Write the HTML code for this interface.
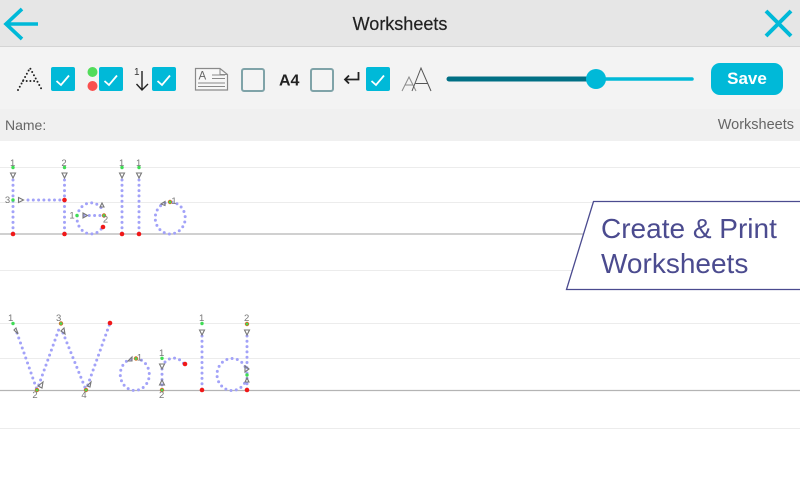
<!DOCTYPE html>
<html>
<head>
<meta charset="utf-8">
<style>
html,body{margin:0;padding:0;background:#fff}
body{width:800px;height:480px;overflow:hidden;position:relative;font-family:"Liberation Sans",sans-serif}
.abs{position:absolute}
.cb{position:absolute;top:67px;width:24px;height:24px;border-radius:2px;background:#00b9d8}
.cb svg{position:absolute;left:0;top:0}
.un{position:absolute;top:68px;width:20px;height:20px;border:2px solid #7fa3a8;border-radius:3px;background:#f4f4f4}
</style>
</head>
<body>
<div class="abs" style="left:0;top:0;width:800px;height:46px;background:#e6e6e6"></div>
<div class="abs" style="left:0;top:46px;width:800px;height:1px;background:#d4d4d4"></div>
<div class="abs" style="left:0;top:47px;width:800px;height:62px;background:#f3f3f3"></div>
<div class="abs" style="left:0;top:109px;width:800px;height:32px;background:#f0f0f0"></div>

<div class="abs" style="left:0;top:13px;width:800px;text-align:center;font-size:18px;line-height:22px;color:#222;-webkit-text-stroke:.2px #222">Worksheets</div>

<svg class="abs" style="left:0;top:0" width="800" height="140">
  <path d="M22 9 L6 24 L22 39 M6 24 H38" fill="none" stroke="#00b9d8" stroke-width="3.6"/>
  <path d="M766 11 L791 36 M791 11 L766 36" fill="none" stroke="#00b9d8" stroke-width="4"/>
  <!-- dotted A -->
  <path d="M18 90 L30 68 L42 90 M23 81 H37" fill="none" stroke="#222" stroke-width="2" stroke-linecap="round" stroke-dasharray="0 3.7"/>
  <!-- dots -->
  <circle cx="92.500" cy="72" r="5" fill="#52dc5a"/>
  <circle cx="92.500" cy="86" r="5" fill="#f9504f"/>
  <!-- order arrow -->
  <text x="134" y="75" font-size="10" fill="#333" font-family="Liberation Sans">1</text>
  <path d="M142 71 V89 M136.500 84 L142 90 L148 84" fill="none" stroke="#222" stroke-width="1.400"/>
  <!-- doc icon -->
  <path d="M195.500 68.500 H220 L227.500 74.500 V90 H195.500 Z" fill="#f7f7f7" stroke="#8a8a8a" stroke-width="1.200"/>
  <path d="M220 68.500 V74.500 H227.500" fill="none" stroke="#8a8a8a"/>
  <path d="M198 83 H225 M198 86.500 H225 M212 75 H225 M212 78.500 H225" stroke="#8a8a8a" stroke-width="1"/>
  <text x="198.500" y="79.500" font-size="11.500" fill="#666">A</text>
  <!-- A4 -->
  <text x="279" y="85.500" font-size="16" font-weight="bold" fill="#222">A4</text>
  <!-- return -->
  <path d="M358.500 72 V79.500 H345 M349 75.500 L345 79.500 L349 83.500" fill="none" stroke="#222" stroke-width="1.800"/>
  <!-- font size -->
  <path d="M402 91 L409 77 L416 91 M404.500 85 H413.500" fill="none" stroke="#8a8a8a" stroke-width="1"/>
  <path d="M412 91 L421 68 L431 91 M415.500 83.500 H427.500" fill="none" stroke="#555" stroke-width="1"/>
  <!-- slider -->
  <path d="M449 79 H596" stroke="#006f84" stroke-width="5" stroke-linecap="round"/>
  <path d="M596 79 H692" stroke="#00b9d8" stroke-width="3.500" stroke-linecap="round"/>
  <circle cx="596" cy="79" r="10" fill="#00b9d8"/>
</svg>

<div class="cb" style="left:50.500px"><svg width="24" height="24"><path d="M5.500 14 L10 18 L18 8.500" fill="none" stroke="#fff" stroke-width="1.800"/></svg></div>
<div class="cb" style="left:99px"><svg width="24" height="24"><path d="M5.500 14 L10 18 L18 8.500" fill="none" stroke="#fff" stroke-width="1.800"/></svg></div>
<div class="cb" style="left:151.500px"><svg width="24" height="24"><path d="M5.500 14 L10 18 L18 8.500" fill="none" stroke="#fff" stroke-width="1.800"/></svg></div>
<div class="un" style="left:241px"></div>
<div class="un" style="left:310px"></div>
<div class="cb" style="left:366px"><svg width="24" height="24"><path d="M5.500 14 L10 18 L18 8.500" fill="none" stroke="#fff" stroke-width="1.800"/></svg></div>

<div class="abs" style="left:711px;top:63px;width:72px;height:32px;border-radius:9px;background:#00b9d8;color:#fff;font-size:17px;font-weight:bold;line-height:31px;text-align:center">Save</div>

<div class="abs" style="left:5px;top:116px;font-size:14px;line-height:18px;color:#666">Name:</div>
<div class="abs" style="right:6px;top:116px;font-size:14.500px;line-height:18px;color:#666">Worksheets</div>

<svg class="abs" style="left:0;top:141px" width="800" height="339" viewBox="0 141 800 339" font-family="Liberation Sans" font-size="9.500" fill="#777" text-anchor="middle">
  <g stroke="#ececec" stroke-width="1">
    <path d="M0 167.500 H800 M0 202.500 H800 M0 270.500 H800 M0 323.500 H800 M0 358.500 H800 M0 428.500 H800"/>
  </g>
  <path d="M0 234 H800 M0 390.500 H800" stroke="#b4b4b4" stroke-width="1.300"/>

  <g fill="none" stroke="#a2a2f8" stroke-width="3" stroke-linecap="round" stroke-dasharray="0 5.300">
    <path d="M13 180 V234"/>
    <path d="M64.500 180 V234"/>
    <path d="M28 200 H64"/>
    <path d="M84 215.500 H103"/>
    <path d="M101 207.500 A14 15.500 0 1 0 102.700 227"/>
    <path d="M122 180 V234"/>
    <path d="M139 180 V234"/>
    <path d="M165 203 A15 16 0 1 0 170 202"/>
    <path d="M17 333 L37 390"/>
    <path d="M37 390 L59 329"/>
    <path d="M63 333 L86 390"/>
    <path d="M86 390 L110 323"/>
    <path d="M131 359 A14.500 16 0 1 0 136 358.500"/>
    <path d="M162 369 V390"/>
    <path d="M165 362 C170 357 178 356 184 364"/>
    <path d="M202 336 V390"/>
    <path d="M247 336 V390"/>
    <path d="M245 366.500 A15 16 0 1 0 245 382.500"/>
  </g>

  <!-- arrows -->
  <g fill="none" stroke="#777" stroke-width="1.100">
    <path d="M10.500 173 L13 178 L15.500 173 Z"/>
    <path d="M62 173 L64.500 178 L67 173 Z"/>
    <path d="M119.500 173 L122 178 L124.500 173 Z"/>
    <path d="M136.500 173 L139 178 L141.500 173 Z"/>
    <path d="M18.500 197.500 L23.500 200 L18.500 202.500 Z"/>
    <path d="M83 213 L87.500 215.500 L83 218 Z"/>
    <path d="M100 207 L102 203 L104 207 Z"/>
    <path d="M161 204 L165 201.500 L165 205.500 Z"/>
    <path d="M14 330 L18 334 L16 328 Z"/>
    <path d="M38 386 L43 382 L42 388 Z"/>
    <path d="M61 331 L65 334 L64 328 Z"/>
    <path d="M87 386 L91 382 L90 387 Z"/>
    <path d="M128 361 L132 357 L132 361 Z"/>
    <path d="M159.500 364 L162 369 L164.500 364 Z"/>
    <path d="M159.500 385 L162 380 L164.500 385 Z"/>
    <path d="M199.500 330 L202 335 L204.500 330 Z"/>
    <path d="M244.500 330 L247 335 L249.500 330 Z"/>
    <path d="M245 366 L249 369 L245 372 Z"/>
    <path d="M245 382 L247 378 L249 382 Z"/>
  </g>

  <!-- red end dots -->
  <g fill="#f01818">
    <circle cx="13" cy="234" r="2.300"/><circle cx="64.500" cy="234" r="2.300"/><circle cx="64.500" cy="200" r="2.300"/>
    <circle cx="103" cy="227" r="2.300"/><circle cx="122" cy="234" r="2.300"/><circle cx="139" cy="234" r="2.300"/>
    <circle cx="110" cy="323" r="2.300"/><circle cx="185" cy="364" r="2.300"/><circle cx="202" cy="390" r="2.300"/><circle cx="247" cy="390" r="2.300"/>
  </g>
  <!-- overlap dots -->
  <g fill="#d0702a">
    <circle cx="104" cy="215.500" r="2.200"/><circle cx="170" cy="202" r="2.200"/>
    <circle cx="37" cy="390" r="2.200"/><circle cx="61" cy="323.500" r="2.200"/><circle cx="86" cy="390" r="2.200"/>
    <circle cx="136" cy="358.500" r="2.200"/><circle cx="162" cy="390" r="2.200"/><circle cx="247" cy="324" r="2.200"/>
  </g>
  <!-- green start dots -->
  <g fill="#3fdc55">
    <circle cx="13" cy="167.500" r="1.700"/><circle cx="64.500" cy="167.500" r="1.700"/><circle cx="13" cy="200" r="1.700"/>
    <circle cx="77" cy="215.500" r="1.700"/><circle cx="104" cy="215.500" r="1.300"/><circle cx="122" cy="167.500" r="1.700"/><circle cx="139" cy="167.500" r="1.700"/>
    <circle cx="170" cy="202" r="1.300"/><circle cx="13" cy="323.500" r="1.700"/><circle cx="37" cy="390" r="1.300"/>
    <circle cx="61" cy="323.500" r="1.300"/><circle cx="86" cy="390" r="1.300"/><circle cx="136" cy="358.500" r="1.300"/>
    <circle cx="162" cy="358.300" r="1.700"/><circle cx="162" cy="390" r="1.300"/><circle cx="202" cy="323.500" r="1.700"/>
    <circle cx="247" cy="324" r="1.300"/><circle cx="247" cy="375" r="1.700"/>
  </g>

  <!-- stroke numbers -->
  <text x="12.700" y="166">1</text><text x="64" y="166">2</text><text x="7.500" y="203">3</text>
  <text x="72" y="218.500">1</text><text x="105.500" y="222.500">2</text><text x="121.700" y="166">1</text><text x="138.700" y="166">1</text>
  <text x="174" y="204">1</text>
  <text x="10.700" y="321">1</text><text x="35" y="398">2</text><text x="58.700" y="321">3</text><text x="84" y="398">4</text>
  <text x="139.500" y="360.500">1</text><text x="161.700" y="356">1</text><text x="161.700" y="398">2</text>
  <text x="201.700" y="321">1</text><text x="246.700" y="321">2</text>
</svg>

<svg class="abs" style="left:560px;top:195px" width="240" height="100">
  <path d="M250 6.500 H33.500 L6.500 94.500 H250 Z" fill="#fff" stroke="#4b4b8f" stroke-width="1.300"/>
</svg>
<div class="abs" style="left:601px;top:211px;font-size:28px;line-height:35px;color:#4b4b8f;white-space:nowrap">Create &amp; Print<br>Worksheets</div>
</body>
</html>
